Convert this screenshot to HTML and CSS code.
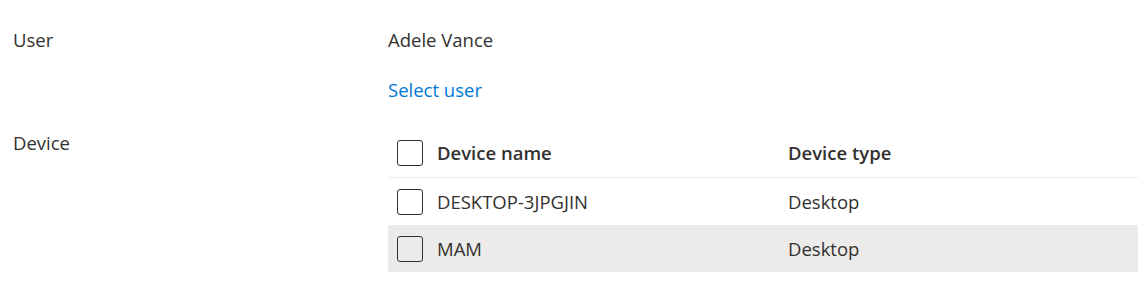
FILE: index.html
```html
<!DOCTYPE html>
<html lang="en">
<head>
  <meta charset="UTF-8">
  <title>Assign device</title>
  <link rel="stylesheet" href="styles.css">
</head>
<body>
  <div class="form">
    <div class="field">
      <div class="label">User</div>
      <div class="value">
        <div class="user-name">Adele Vance</div>
        <a class="link" href="#">Select user</a>
      </div>
    </div>

    <div class="field field-device">
      <div class="label">Device</div>
      <div class="value">
        <div class="table">
          <div class="row head">
            <div class="cell check"><span class="box"></span></div>
            <div class="cell name">Device name</div>
            <div class="cell type">Device type</div>
          </div>
          <div class="row">
            <div class="cell check"><span class="box"></span></div>
            <div class="cell name">DESKTOP-3JPGJIN</div>
            <div class="cell type">Desktop</div>
          </div>
          <div class="row hover">
            <div class="cell check"><span class="box"></span></div>
            <div class="cell name">MAM</div>
            <div class="cell type">Desktop</div>
          </div>
        </div>
      </div>
    </div>
  </div>
</body>
</html>
```

FILE: styles.css
```css
body {
    margin: 0;
    background: #fff;
    color: #323130;
    font-family: 'Open Sans', 'Noto Sans', sans-serif;
    font-size: 18.5px;
}

.form {
    padding: 27px 8px 0 13px;
}

.field {
    display: grid;
    grid-template-columns: 375px 1fr;
}

.label {
    line-height: 26px;
}

.value {
    line-height: 26px;
}

.user-name {
    margin-bottom: 24px;
}

.link {
    color: #0078d4;
    text-decoration: none;
}

.field-device {
    margin-top: 24px;
}

.field-device .label {
    padding-top: 3px;
}

.table {
    display: flex;
    flex-direction: column;
    margin-top: 1px;
}

.row {
    display: grid;
    grid-template-columns: 49px 351px 1fr;
    align-items: center;
    height: 47px;
}

.row.head {
    height: 49px;
    font-weight: 600;
    border-bottom: 1px solid #edebe9;
}

.row.hover {
    background: #edebe9;
}

.check {
    padding-left: 9px;
    display: flex;
}

.box {
    flex: none;
    width: 24px;
    height: 24px;
    border: 1px solid #323130;
    border-radius: 3px;
}
```
